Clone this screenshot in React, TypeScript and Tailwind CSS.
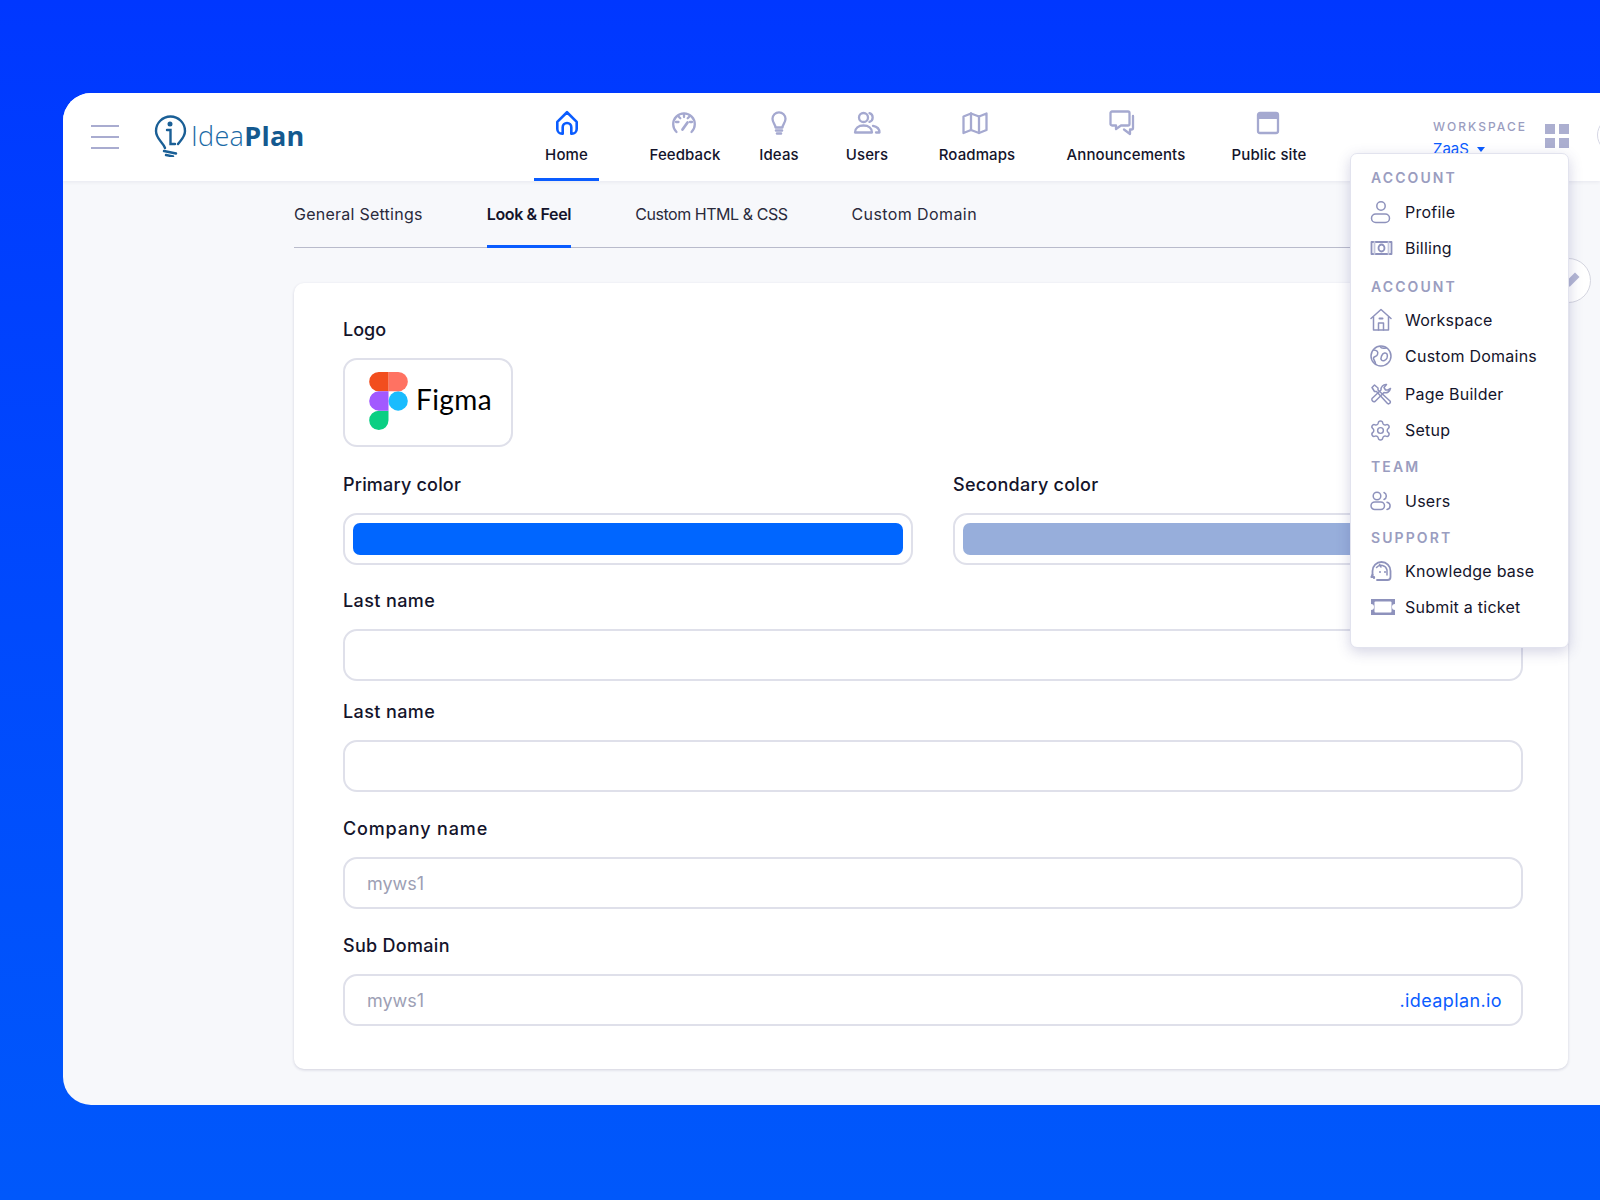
import React from 'react';
import { Settings } from 'lucide-react';

const font = { fontFamily: 'Inter, "Liberation Sans", sans-serif' };

const navStroke = {
  fill: 'none',
  stroke: '#a5a9d0',
  strokeWidth: 2.3,
  strokeLinecap: 'round' as const,
  strokeLinejoin: 'round' as const,
};

const menuStroke = {
  fill: 'none',
  stroke: '#8e92bc',
  strokeWidth: 1.5,
  strokeLinecap: 'round' as const,
  strokeLinejoin: 'round' as const,
};

// Nav icons
const HomeIcon = () => (
  <svg width="28" height="28" viewBox="0 0 26 26" {...navStroke} stroke="#0a5cff" strokeWidth={2.4}>
    <path d="M4 12 L13 3 L22 12 V18.5 A4.5 4.5 0 0 1 17.5 23 H17 V17 A4 4 0 0 0 9 17 V23 H8.5 A4.5 4.5 0 0 1 4 18.5 Z" />
  </svg>
);
const GaugeIcon = () => (
  <svg width="26" height="26" viewBox="0 0 26 26" {...navStroke}>
    <path d="M5.5 22 A10.8 10.8 0 1 1 20.5 22" />
    <path d="M13 4v3M5 12h2.5M19 12h2M7.5 6.5l1.8 1.8M18.5 6.5l-1.8 1.8" />
    <path d="M11.5 19.5 L16.5 12.5" strokeWidth={2.8} />
  </svg>
);
const BulbIcon = () => (
  <svg width="26" height="26" viewBox="0 0 26 26" {...navStroke}>
    <path d="M9.5 17.5 C9.5 14.5 6.5 13 6.5 8.8 A6.5 6.5 0 0 1 19.5 8.8 C19.5 13 16.5 14.5 16.5 17.5 Z" />
    <path d="M10 20.5h6M11 23.5h4" strokeWidth={2.6} />
  </svg>
);
const UsersIcon = () => (
  <svg width="28" height="26" viewBox="0 0 28 26" {...navStroke}>
    <circle cx="10.5" cy="7.5" r="4.5" />
    <path d="M2 22.5 C2 18 5.5 15.5 10.5 15.5 C15.5 15.5 19 18 19 22.5 Z" />
    <path d="M16.5 3.2 A4.5 4.5 0 0 1 16.5 11.8" />
    <path d="M20 15.8 C24 16.5 26.5 19 26.5 22.5 H23" />
  </svg>
);
const MapIcon = () => (
  <svg width="26" height="26" viewBox="0 0 26 26" {...navStroke}>
    <path d="M1.5 6.5 L9 3.5 L17 6.5 L24.5 3.5 V20 L17 23 L9 20 L1.5 23 Z" />
    <path d="M9 3.5V20M17 6.5V23" />
  </svg>
);
const ChatIcon = () => (
  <svg width="26" height="28" viewBox="0 0 26 28" {...navStroke}>
    <path d="M3 2.5 H19 A1.5 1.5 0 0 1 20.5 4 V15 A1.5 1.5 0 0 1 19 16.5 H12 L7 20 V16.5 H3 A1.5 1.5 0 0 1 1.5 15 V4 A1.5 1.5 0 0 1 3 2.5 Z" />
    <path d="M24 7 V19 A1.5 1.5 0 0 1 22.5 20.5 H21 V25 L15 20.5" />
  </svg>
);
const WindowIcon = () => (
  <svg width="24" height="26" viewBox="0 0 24 26">
    <rect x="2" y="3" width="20" height="20" rx="2" fill="none" stroke="#a5a9d0" strokeWidth="2.3" />
    <rect x="2" y="3" width="20" height="6" rx="1.5" fill="#a5a9d0" />
  </svg>
);

// Dropdown icons
const ProfileIcon = () => (
  <svg width="22" height="24" viewBox="0 0 22 24" {...menuStroke}>
    <circle cx="11" cy="6" r="4.2" />
    <rect x="1.5" y="14" width="18" height="8.5" rx="4.25" />
  </svg>
);
const BillIcon = () => (
  <svg width="24" height="16" viewBox="0 0 24 16" {...menuStroke} strokeWidth={1.8}>
    <rect x="1.5" y="2" width="20" height="12" />
    <ellipse cx="11.5" cy="8" rx="3" ry="3.5" />
    <path d="M4.5 2v12M18.5 2v12" stroke="#c5c8de" />
  </svg>
);
const HouseIcon = () => (
  <svg width="22" height="24" viewBox="0 0 22 24" {...menuStroke}>
    <path d="M1 10.5 L11 1.5 L21 10.5" />
    <path d="M3.5 9 V22 H18.5 V9" />
    <path d="M8.5 22 V15 H13.5 V22" />
    <path d="M9.5 10.5h3" strokeWidth={2} />
  </svg>
);
const GlobeIcon = () => (
  <svg width="22" height="22" viewBox="0 0 22 22" {...menuStroke}>
    <circle cx="11" cy="11" r="10" />
    <path d="M3.5 5 C7 5 8.5 7 7.5 9.5 C6.5 12 4 11 3.5 13 C3.2 15 5.5 16 5.5 19" />
    <path d="M14.5 8 C17 7.5 18 10 17 13 C16 15.5 13 16.5 11.5 15 C10 13.5 12 8.5 14.5 8 Z" />
    <path d="M10 1.5 C11 3.5 14 3.5 16 3" />
  </svg>
);
const ToolsIcon = () => (
  <svg width="22" height="22" viewBox="0 0 22 22" {...menuStroke}>
    <path d="M2 4.5 L4.5 2 L8 5 V7 L20 18 A1.8 1.8 0 0 1 17.5 20.5 L6.5 8.5 H4.5 Z" />
    <path d="M20.5 5.5 A5 5 0 0 1 14 9.5 L5 18.5 A2.3 2.3 0 0 1 2 15.5 L11 7 A5 5 0 0 1 16.5 1.5 L14 4.5 L15.5 7 L18 7 Z" />
  </svg>
);
const GearIcon = () => <Settings size={23} color="#8e92bc" strokeWidth={1.5} className="-ml-[1px]" />;
const PeopleIcon = () => (
  <svg width="22" height="20" viewBox="0 0 22 20" {...menuStroke}>
    <circle cx="7" cy="5" r="3.8" />
    <rect x="1" y="11" width="13.5" height="7.5" rx="3.75" />
    <path d="M14 1.5 A3.8 3.8 0 0 1 14 8.5" />
    <path d="M17 11.2 A3.7 3.7 0 0 1 17 18.5" />
  </svg>
);
const HeadIcon = () => (
  <svg width="22" height="22" viewBox="0 0 22 22" {...menuStroke}>
    <path d="M2.5 15 V11 A9 9 0 0 1 20.5 11 V17 A3 3 0 0 1 17.5 20 H7" strokeWidth={1.8} />
    <path d="M6.5 7.5 A6 6 0 0 1 17 10 V15" />
    <path d="M9.5 4.5 L11 7" />
    <circle cx="10" cy="12" r="1" fill="#8e92bc" stroke="none" />
    <circle cx="15" cy="12" r="1" fill="#8e92bc" stroke="none" />
    <path d="M2.5 15 L1.5 17 H4 L4 18" strokeWidth={2.2} />
  </svg>
);
const TicketIcon = () => (
  <svg width="26" height="18" viewBox="0 0 26 18">
    <path d="M1 1 H25 V6 A3 3 0 0 0 25 12 V17 H1 V12 A3 3 0 0 0 1 6 Z" fill="#8e92bc" />
    <rect x="4.5" y="3.5" width="17" height="11" rx="1" fill="#fff" />
  </svg>
);

const FigmaLogo = () => (
  <svg width="39" height="58" viewBox="0 0 38 57">
    <path d="M19 28.5a9.5 9.5 0 1 1 19 0 9.5 9.5 0 0 1-19 0z" fill="#1abcfe" />
    <path d="M0 47.5A9.5 9.5 0 0 1 9.5 38H19v9.5a9.5 9.5 0 1 1-19 0z" fill="#0acf83" />
    <path d="M19 0v19h9.5a9.5 9.5 0 1 0 0-19H19z" fill="#ff7262" />
    <path d="M0 9.5A9.5 9.5 0 0 0 9.5 19H19V0H9.5A9.5 9.5 0 0 0 0 9.5z" fill="#f24e1e" />
    <path d="M0 28.5A9.5 9.5 0 0 0 9.5 38H19V19H9.5A9.5 9.5 0 0 0 0 28.5z" fill="#a259ff" />
  </svg>
);

const navItems = [
  { label: 'Home', icon: HomeIcon, box: 'w-[65px]', shift: '', active: true },
  { label: 'Feedback', icon: GaugeIcon, box: 'w-[72px] ml-[50px]', shift: '-ml-[2px]' },
  { label: 'Ideas', icon: BulbIcon, box: 'w-[40px] ml-[38px]', shift: '' },
  { label: 'Users', icon: UsersIcon, box: 'w-[40px] ml-[48px]', shift: '' },
  { label: 'Roadmaps', icon: MapIcon, box: 'w-[80px] ml-[50px]', shift: '-ml-[4px]' },
  { label: 'Announcements', icon: ChatIcon, box: 'w-[122px] ml-[48px]', shift: '-ml-[8px]' },
  { label: 'Public site', icon: WindowIcon, box: 'w-[74px] ml-[45px]', shift: '-ml-[3px]' },
];

const tabs = [
  { label: 'General Settings', fit: 'tracking-[0.25px]' },
  { label: 'Look & Feel', fit: 'tracking-[-0.35px]', active: true },
  { label: 'Custom HTML & CSS', fit: 'tracking-[-0.45px]' },
  { label: 'Custom Domain', fit: 'tracking-[0.4px]' },
];

const MenuHead = ({ title, className }: { title: string; className: string }) => (
  <div className={`h-5 flex items-center pl-[20px] text-[14px] font-semibold tracking-[0.15em] text-[#9a9dc0] ${className}`}>
    {title}
  </div>
);

const MenuRow = ({ icon: Icon, label, className = '' }: { icon: React.FC; label: string; className?: string }) => (
  <div className={`h-9 flex items-center ${className}`}>
    <div className="w-[54px] pl-[19px] flex items-center">
      <Icon />
    </div>
    <span className="text-[16px] tracking-[0.015em] text-[#14142b]">{label}</span>
  </div>
);

const Label = ({ children, fit = '' }: { children: React.ReactNode; fit?: string }) => (
  <div className={`h-7 mb-[15px] flex items-center text-[18px] font-medium text-[#14142b] ${fit}`}>{children}</div>
);

const TextInput = ({ children }: { children?: React.ReactNode }) => (
  <div className="h-[52px] px-[22px] flex items-center justify-between bg-white border-2 border-[#dfe0ea] rounded-[14px] text-[18px] text-[#9d9fb5]">
    {children}
  </div>
);

const App = () => {
  return (
    <div
      className="w-[1600px] h-[1200px] overflow-hidden pt-[93px] pl-[63px] bg-gradient-to-b from-[#0037ff] to-[#0058fb]"
      style={font}
    >
      <div className="relative w-[1537px] h-[1012px] bg-[#f7f8fb] rounded-l-[28px] overflow-hidden">
        {/* Header */}
        <div className="h-[88px] flex bg-white shadow-[0_1px_4px_rgba(40,40,90,0.08)]">
          <div className="ml-[28px] mt-[32px] w-[28px] shrink-0 flex flex-col gap-[9px]">
            <div className="h-[2px] bg-[#a9acd0]" />
            <div className="h-[2px] bg-[#a9acd0]" />
            <div className="h-[2px] bg-[#a9acd0]" />
          </div>
          <div className="ml-[35px] flex items-center w-[150px] shrink-0 mb-[2px]">
            <svg width="33" height="42" viewBox="0 0 33 42" fill="none" stroke="#1a5f96" strokeWidth="2.4" strokeLinecap="round" className="shrink-0">
              <path d="M11 33 C9 27 2 24 2 16 A14.5 14.5 0 0 1 31 16 C31 22 27 25 24 29" />
              <path d="M13 15 H16.5 V29 H21" />
              <circle cx="16" cy="9" r="1.3" fill="#1a5f96" />
              <path d="M10 36 L22 38.5M12 40 L19 41.5" />
            </svg>
            <span className="ml-[4px] text-[27px] tracking-[0.3px] text-[#1a6aa6] font-light whitespace-nowrap" style={{ fontFamily: '"Open Sans", sans-serif' }}>
              Idea<b className="font-bold text-[#14598f]">Plan</b>
            </span>
          </div>
          <div className="ml-[230px] flex shrink-0">
            {navItems.map((item) => (
              <div
                key={item.label}
                className={`${item.box} ${item.active ? 'border-b-[3px] border-[#0a5cff]' : ''} flex flex-col items-center pt-[17px]`}
              >
                <div className={`h-[26px] flex items-center justify-center ${item.shift}`}>
                  <item.icon />
                </div>
                <span className="mt-[8px] text-[15px] font-medium tracking-[0.1px] whitespace-nowrap text-[#14142b]">{item.label}</span>
              </div>
            ))}
          </div>
          <div className="ml-[127px] pt-[25px] w-[96px] shrink-0">
            <div className="text-[12px] font-medium leading-[18px] tracking-[0.17em] text-[#9a9dc0]">WORKSPACE</div>
            <div className="mt-[2px] flex items-center gap-2 text-[15px] text-[#0a5cff]">
              ZaaS
              <span className="w-0 h-0 border-x-[4px] border-t-[5px] border-x-transparent border-t-[#0a5cff]" />
            </div>
          </div>
          <div className="ml-[16px] mt-[31px] w-[24px] h-[24px] grid grid-cols-2 gap-[4px] shrink-0">
            <div className="bg-[#acafd0]" />
            <div className="bg-[#acafd0]" />
            <div className="bg-[#acafd0]" />
            <div className="bg-[#acafd0]" />
          </div>
          <div className="ml-[28px] mt-[24px] w-[36px] h-[36px] shrink-0 rounded-full border border-[#d5d6e4]" />
        </div>

        {/* Settings */}
        <div className="pl-[231px] pr-[32px]">
          <div className="h-[67px] flex gap-[64px] border-b border-[#b9bbcb]">
            {tabs.map((tab) => (
              <div
                key={tab.label}
                className={
                  tab.active
                    ? `h-[67px] pt-[21px] border-b-[3px] border-[#0a5cff] text-[16px] font-semibold text-[#14142b] ${tab.fit}`
                    : `h-[67px] pt-[21px] text-[16px] text-[#2a2a3c] ${tab.fit}`
                }
              >
                {tab.label}
              </div>
            ))}
          </div>

          <div className="mt-[35px] h-[786px] pl-[49px] pr-[45px] pt-[32px] bg-white rounded-[10px] shadow-[0_1px_3px_rgba(40,40,90,0.18)]">
            <Label>Logo</Label>
            <div className="w-[170px] h-[89px] pl-[24px] pb-[4px] flex items-center gap-[8px] border-2 border-[#dfe0ea] rounded-[14px]">
              <FigmaLogo />
              <span className="-mt-[3px] text-[28px] tracking-[0.4px] text-black" style={{ fontFamily: 'Lato, sans-serif' }}>Figma</span>
            </div>

            <div className="mt-[23px] grid grid-cols-2 gap-[40px]">
              <div>
                <Label fit="tracking-[0.2px]">Primary color</Label>
                <div className="h-[52px] p-[8px] border-2 border-[#dfe0ea] rounded-[14px]">
                  <div className="h-full rounded-[7px] bg-[#0066ff]" />
                </div>
              </div>
              <div>
                <Label fit="tracking-[0.25px]">Secondary color</Label>
                <div className="h-[52px] p-[8px] border-2 border-[#dfe0ea] rounded-[14px]">
                  <div className="h-full rounded-[7px] bg-[#97aedb]" />
                </div>
              </div>
            </div>

            <div className="mt-[21px]">
              <Label fit="tracking-[0.4px]">Last name</Label>
              <TextInput />
            </div>
            <div className="mt-[16px]">
              <Label fit="tracking-[0.4px]">Last name</Label>
              <TextInput />
            </div>
            <div className="mt-[22px]">
              <Label fit="tracking-[0.85px]">Company name</Label>
              <TextInput>myws1</TextInput>
            </div>
            <div className="mt-[22px]">
              <Label fit="tracking-[0.3px]">Sub Domain</Label>
              <TextInput>
                myws1
                <span className="-mr-[3px] tracking-[0.4px] text-[#0a5cff]">.ideaplan.io</span>
              </TextInput>
            </div>
          </div>
        </div>

        {/* Edit button behind the menu */}
        <div className="absolute left-[1483px] top-[165px] w-[45px] h-[45px] pl-[17px] pt-[12px] rounded-full bg-white border border-[#d5d6e0]">
          <svg width="17" height="17" viewBox="0 0 17 17" fill="#b4b7d4">
            <path d="M11 1.5 L15.5 6 L6 15.5 L1 16 L1.5 11 Z" />
          </svg>
        </div>

        {/* Account menu */}
        <div className="absolute left-[1287px] top-[60px] w-[219px] h-[495px] pt-[13px] bg-white border border-[#e2e3ee] rounded-[7px] shadow-[0_4px_14px_rgba(60,60,130,0.22)]">
          <MenuHead title="ACCOUNT" className="" />
          <MenuRow icon={ProfileIcon} label="Profile" className="mt-[7px]" />
          <MenuRow icon={BillIcon} label="Billing" />
          <MenuHead title="ACCOUNT" className="mt-[10px]" />
          <MenuRow icon={HouseIcon} label="Workspace" className="mt-[6px]" />
          <MenuRow icon={GlobeIcon} label="Custom Domains" />
          <MenuRow icon={ToolsIcon} label="Page Builder" className="mt-[2px]" />
          <MenuRow icon={GearIcon} label="Setup" />
          <MenuHead title="TEAM" className="mt-[8px]" />
          <MenuRow icon={PeopleIcon} label="Users" className="mt-[7px]" />
          <MenuHead title="SUPPORT" className="mt-[8px]" />
          <MenuRow icon={HeadIcon} label="Knowledge base" className="mt-[6px]" />
          <MenuRow icon={TicketIcon} label="Submit a ticket" />
        </div>
      </div>
    </div>
  );
};

export default App;
